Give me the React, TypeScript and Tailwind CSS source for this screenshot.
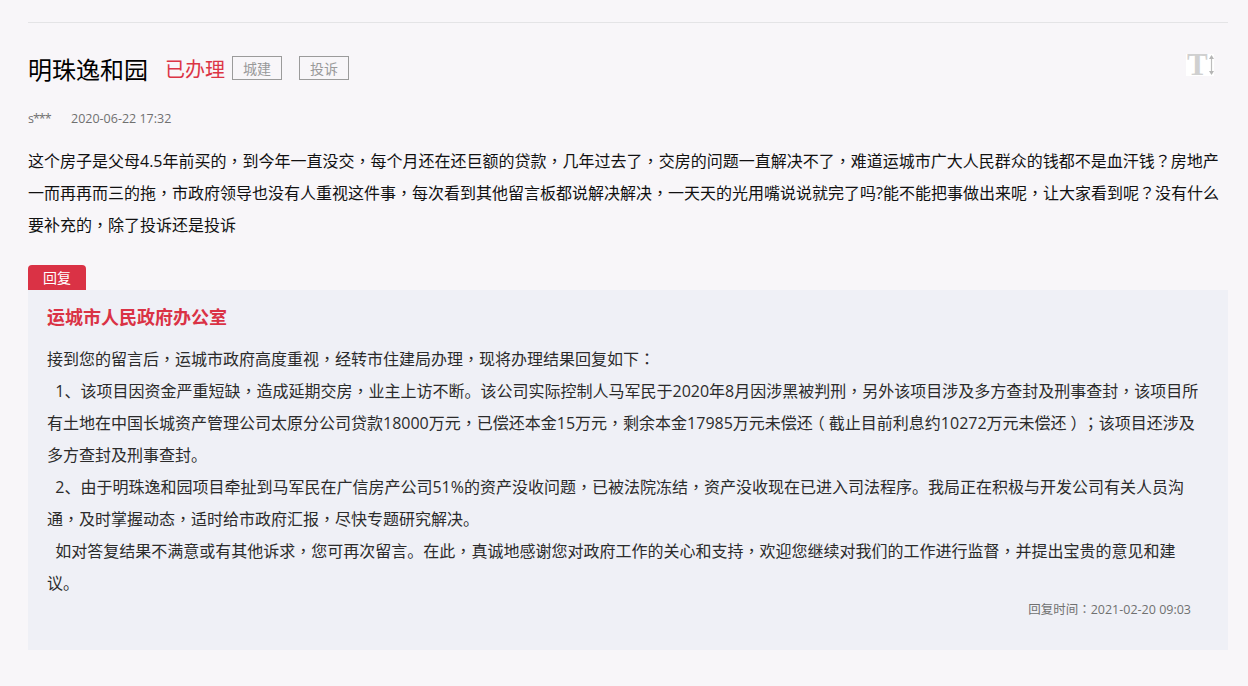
import React from 'react';

const bodyFont = 'font-["Open_Sans","Noto_Sans_CJK_SC",sans-serif]';

// the reference font centres these marks, the SC face does not
const Txt = ({ children }: { children: string }) => (
  <>
    {children.split(/([，：？（）；])/).map((part, i) => {
      if (i % 2 === 0) return part;
      let nudge = '';
      if (part === '（') nudge = '-ml-[4px] pr-[4px]';
      if (part === '）') nudge = 'pl-[4px] -mr-[4px]';
      return (
        <span key={i} className={`font-["Noto_Sans_CJK_TC",sans-serif] leading-[0] ${nudge}`}>{part}</span>
      );
    })}
  </>
);

const replyLines = [
  '接到您的留言后，运城市政府高度重视，经转市住建局办理，现将办理结果回复如下：',
  '\u00a0\u00a01、该项目因资金严重短缺，造成延期交房，业主上访不断。该公司实际控制人马军民于2020年8月因涉黑被判刑，另外该项目涉及多方查封及刑事查封，该项目所有土地在中国长城资产管理公司太原分公司贷款18000万元，已偿还本金15万元，剩余本金17985万元未偿还（截止目前利息约10272万元未偿还）；该项目还涉及多方查封及刑事查封。',
  '\u00a0\u00a02、由于明珠逸和园项目牵扯到马军民在广信房产公司51%的资产没收问题，已被法院冻结，资产没收现在已进入司法程序。我局正在积极与开发公司有关人员沟通，及时掌握动态，适时给市政府汇报，尽快专题研究解决。',
  '\u00a0\u00a0如对答复结果不满意或有其他诉求，您可再次留言。在此，真诚地感谢您对政府工作的关心和支持，欢迎您继续对我们的工作进行监督，并提出宝贵的意见和建议。',
];

const App: React.FC = () => {
  return (
    <div className={`min-h-[686px] bg-[#f8f6f9] pt-[22px] pr-[20px] pl-[28px] [text-spacing-trim:space-all] ${bodyFont}`}>
      <div className="border-t border-[#e4e4e6] pt-[26px]">
        {/* Title row */}
        <div className="flex items-center justify-between">
          <div className="flex items-center">
            <h1 className="text-[24px] leading-[42px] font-normal text-black">明珠逸和园</h1>
            <span className="ml-[17px] text-[20px] leading-[42px] text-[#dc3545]">已办理</span>
            <span className="mb-[4px] ml-[7px] flex h-[24px] w-[50px] items-center justify-center border border-[#9b9b9b] text-[14px] text-[#999]">城建</span>
            <span className="mb-[4px] ml-[17px] flex h-[24px] w-[50px] items-center justify-center border border-[#9b9b9b] text-[14px] text-[#999]">投诉</span>
          </div>
          <div className="mr-[14px] mb-[11px] flex h-[22px] w-[28px] items-center justify-between bg-white">
            <span className='pl-[1px] font-["Liberation_Serif",serif] text-[31px] leading-[22px] font-bold text-[#d0d0d0]'>T</span>
            <svg width="7" height="22" viewBox="0 0 7 22" className="mr-[-1px]">
              <path d="M3.5 2v18" stroke="#bdbdbd" strokeWidth="1.2" />
              <path d="M1 5 3.5 1 6 5zM1 17l2.5 4L6 17z" fill="#b5b5b5" />
            </svg>
          </div>
        </div>

        {/* Author and date */}
        <div className="mt-[18px] flex text-[12.5px] leading-[20px] text-[#707070]">
          <span className="w-[21px] tracking-[-1px]">s***</span>
          <span className="ml-[22px]">2020-06-22 17:32</span>
        </div>

        {/* Message */}
        <p className="mt-[16px] text-[16px] leading-[32px] text-[#111]">
          <Txt>这个房子是父母4.5年前买的，到今年一直没交，每个月还在还巨额的贷款，几年过去了，交房的问题一直解决不了，难道运城市广大人民群众的钱都不是血汗钱？房地产一而再再而三的拖，市政府领导也没有人重视这件事，每次看到其他留言板都说解决解决，一天天的光用嘴说说就完了吗?能不能把事做出来呢，让大家看到呢？没有什么要补充的，除了投诉还是投诉</Txt>
        </p>

        {/* Reply */}
        <div className="mt-[24px] flex h-[25px] w-[58px] items-center justify-center rounded-t-[4px] bg-[#da3245] text-[14px] text-white">回复</div>
        <div className="h-[360px] bg-[#eff0f6] pt-[12px] pr-[24px] pl-[19px]">
          <h2 className="text-[18px] leading-[30px] font-bold text-[#da3245]">运城市人民政府办公室</h2>
          <div className="mt-[11px] text-[16px] leading-[32px] text-[#2b2b2b]">
            {replyLines.map((line) => (
              <p key={line}><Txt>{line}</Txt></p>
            ))}
          </div>
          <div className="pt-[1px] pr-[13px] text-right text-[12.5px] leading-[20px] text-[#707070]">
            <Txt>回复时间：2021-02-20 09:03</Txt>
          </div>
        </div>
      </div>
    </div>
  );
};

export default App;
